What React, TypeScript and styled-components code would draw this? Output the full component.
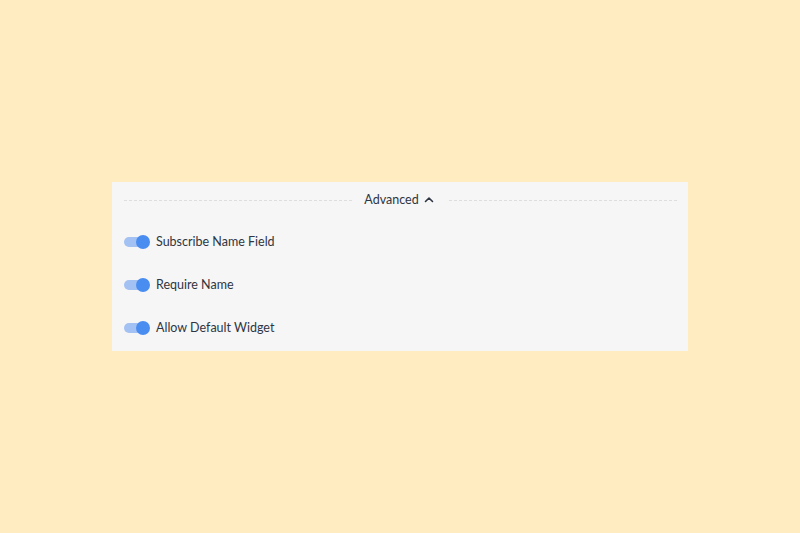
import React from "react";
import styled, { createGlobalStyle } from "styled-components";

const Global = createGlobalStyle`
  html, body { margin: 0; padding: 0; }
  body {
    background: #ffecc1;
    font-family: Lato, "Open Sans", sans-serif;
    width: 800px;
    height: 533px;
  }
`;

const Page = styled.div`
  width: 800px;
  height: 533px;
  display: flex;
  align-items: flex-start;
  justify-content: center;
  padding-top: 182px;
  box-sizing: border-box;
`;

const Panel = styled.div`
  width: 576px;
  height: 169px;
  background: #f6f6f6;
  box-sizing: border-box;
  padding: 9px 11px 0 12px;
  display: flex;
  flex-direction: column;
`;

const Header = styled.div`
  display: flex;
  align-items: center;
  height: 18px;
`;

const Rule = styled.div`
  flex: 1;
  border-top: 1px dashed #dedede;
`;

const HeaderLabel = styled.div`
  display: flex;
  align-items: center;
  gap: 5px;
  padding: 0 15px 0 12px;
  font-size: 12.5px;
  color: #2f3542;
  line-height: 18px;
`;

const List = styled.div`
  display: flex;
  flex-direction: column;
  gap: 27px;
  margin-top: 25px;
`;

const Row = styled.div`
  display: flex;
  align-items: center;
  gap: 6px;
  height: 16px;
`;

const Track = styled.div<{ $on: boolean }>`
  position: relative;
  width: 26px;
  height: 14px;
  display: flex;
  align-items: center;
  &::before {
    content: "";
    display: block;
    width: 22px;
    height: 10px;
    border-radius: 5px;
    background: ${(p) => (p.$on ? "#a3c1f3" : "#cfcfcf")};
  }
`;

const Thumb = styled.div<{ $on: boolean }>`
  position: absolute;
  top: 0;
  left: ${(p) => (p.$on ? "12px" : "0")};
  width: 14px;
  height: 14px;
  border-radius: 50%;
  background: ${(p) => (p.$on ? "#4a8df0" : "#ffffff")};
`;

const Label = styled.span`
  font-size: 12.5px;
  color: #2f3542;
  line-height: 16px;
`;

const items = ["Subscribe Name Field", "Require Name", "Allow Default Widget"];

export default function App() {
  return (
    <>
      <Global />
      <Page>
        <Panel>
          <Header>
            <Rule />
            <HeaderLabel>
              Advanced
              <svg width="10" height="10" viewBox="0 0 10 10" fill="none">
                <path d="M1.5 6.5 L5 3 L8.5 6.5" stroke="#2f3542" strokeWidth="1.6" strokeLinecap="round" strokeLinejoin="round" />
              </svg>
            </HeaderLabel>
            <Rule />
          </Header>
          <List>
            {items.map((t) => (
              <Row key={t}>
                <Track $on>
                  <Thumb $on />
                </Track>
                <Label>{t}</Label>
              </Row>
            ))}
          </List>
        </Panel>
      </Page>
    </>
  );
}
